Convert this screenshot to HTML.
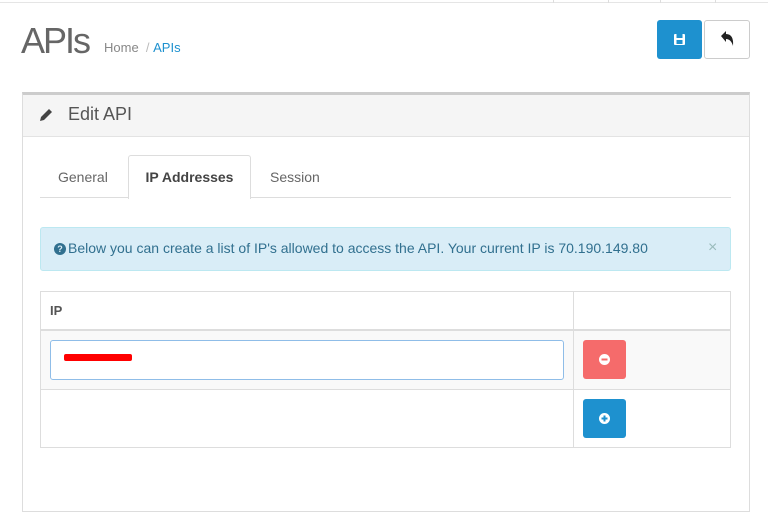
<!DOCTYPE html><html><head><style>
*{box-sizing:border-box}body{margin:0;width:768px;height:476px;overflow:hidden;background:#fff;font-family:"Liberation Sans",sans-serif;position:relative;color:#555}
.a{position:absolute}
</style></head><body>
<div class="a" style="left:0;top:0;width:768px;height:3px;border-bottom:1px solid #e5e5e5"></div>
<div class="a" style="left:553px;top:0;width:1px;height:3px;background:#ddd"></div>
<div class="a" style="left:608px;top:0;width:1px;height:3px;background:#ddd"></div>
<div class="a" style="left:660px;top:0;width:1px;height:3px;background:#ddd"></div>
<div class="a" style="left:715px;top:0;width:1px;height:3px;background:#ddd"></div>
<div class="a" style="left:21px;top:20px;font-size:36px;color:#666;letter-spacing:-2px">APIs</div>
<div class="a" style="left:104px;top:40px;font-size:13px;color:#888">Home <span style="color:#bbb">&nbsp;/&nbsp;</span><span style="color:#1e91cf">APIs</span></div>
<div class="a" style="left:657px;top:20px;width:45px;height:39px;background:#1e91cf;border-radius:3px"><svg width="45" height="39"><rect x="17" y="14" width="11" height="11" rx="1" fill="#fff"/><rect x="19.5" y="14" width="6" height="4" fill="#1e91cf"/><rect x="19.5" y="20" width="6" height="4" fill="#1e91cf"/></svg></div>
<div class="a" style="left:704px;top:20px;width:46px;height:39px;border:1px solid #ccc;border-radius:3px;background:#fff"><svg width="44" height="37"><path d="M16 15 L21 10 L21 13 Q29 13 28 25 Q26 18 21 18 L21 21 Z" fill="#222"/></svg></div>
<div class="a" style="left:22px;top:92px;width:728px;height:420px;border:1px solid #ddd;border-top:3px solid #ccc"></div>
<div class="a" style="left:23px;top:95px;width:726px;height:42px;background:#f5f5f5;border-bottom:1px solid #e3e3e3"></div>
<svg class="a" style="left:38px;top:107px" width="16" height="16"><path d="M2 14 L3 10 L11 2 L14 5 L6 13 Z" fill="#444"/></svg>
<div class="a" style="left:68px;top:104px;font-size:18px;color:#555">Edit API</div>
<div class="a" style="left:40px;top:197px;width:691px;height:1px;background:#ddd"></div>
<div class="a" style="left:58px;top:169px;font-size:14px;color:#666">General</div>
<div class="a" style="left:128px;top:155px;width:123px;height:44px;border:1px solid #ddd;border-bottom:none;background:#fff;border-radius:3px 3px 0 0;font-size:14px;font-weight:bold;color:#444;text-align:center;padding-top:13px">IP Addresses</div>
<div class="a" style="left:270px;top:169px;font-size:14px;color:#666">Session</div>
<div class="a" style="left:40px;top:227px;width:691px;height:44px;background:#d9edf7;border:1px solid #bce8f1;border-radius:3px"></div>
<div class="a" style="left:54px;top:243px;width:12px;height:12px;border-radius:50%;background:#31708f;color:#d9edf7;font-size:9px;font-weight:bold;text-align:center;line-height:12px">?</div>
<div class="a" style="left:68px;top:240px;font-size:14px;color:#31708f;white-space:nowrap">Below you can create a list of IP's allowed to access the API. Your current IP is 70.190.149.80</div>
<div class="a" style="left:708px;top:239px;color:#9bb;font-size:16px">×</div>
<div class="a" style="left:40px;top:291px;width:691px;height:157px;border:1px solid #ddd"></div>
<div class="a" style="left:41px;top:329px;width:689px;height:2px;background:#ddd"></div>
<div class="a" style="left:41px;top:331px;width:689px;height:58px;background:#f9f9f9"></div>
<div class="a" style="left:41px;top:389px;width:689px;height:1px;background:#ddd"></div>
<div class="a" style="left:573px;top:292px;width:1px;height:155px;background:#ddd"></div>
<div class="a" style="left:50px;top:303px;font-size:13px;font-weight:bold;color:#555">IP</div>
<div class="a" style="left:50px;top:340px;width:514px;height:40px;border:1px solid #8fbde8;border-radius:3px;background:#fff"></div>
<div class="a" style="left:64px;top:354px;width:68px;height:7px;background:#f00;border-radius:2px"></div>
<div class="a" style="left:583px;top:340px;width:43px;height:39px;background:#f56b6b;border-radius:3px"><svg width="43" height="39"><circle cx="21.5" cy="19.5" r="5.5" fill="#fff"/><rect x="18.5" y="18.5" width="6" height="2" fill="#f56b6b"/></svg></div>
<div class="a" style="left:583px;top:399px;width:43px;height:39px;background:#1e91cf;border-radius:3px"><svg width="43" height="39"><circle cx="21.5" cy="19.5" r="5.5" fill="#fff"/><rect x="18.5" y="18.5" width="6" height="2" fill="#1e91cf"/><rect x="20.5" y="16.5" width="2" height="6" fill="#1e91cf"/></svg></div>
</body></html>
